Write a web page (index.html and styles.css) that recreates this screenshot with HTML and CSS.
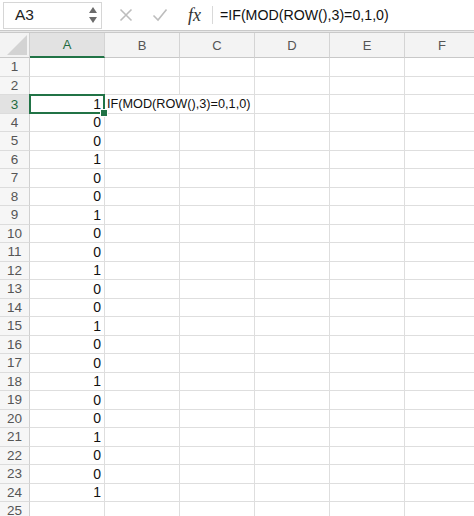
FILE: index.html
```html
<!DOCTYPE html>
<html>
<head>
<meta charset="utf-8">
<link rel="stylesheet" href="styles.css">
</head>
<body>
<div class="app">
  <div class="fbar">
    <div class="namebox">
      <span class="ref">A3</span>
      <span class="spin">
        <svg width="8" height="20" viewBox="0 0 8 20"><path d="M4 2 L8 8 L0 8 Z" fill="#6b6b6b"/><path d="M0 12 L8 12 L4 18 Z" fill="#6b6b6b"/></svg>
      </span>
    </div>
    <div class="tools">
      <svg class="ico-x" width="14" height="14" viewBox="0 0 14 14"><path d="M1.5 1.5 L12.5 12.5 M12.5 1.5 L1.5 12.5" stroke="#bdbdbd" stroke-width="1.6" fill="none"/></svg>
      <svg class="ico-ok" width="16" height="14" viewBox="0 0 16 14"><path d="M1.5 7.5 L6 12 L14.5 1.5" stroke="#bdbdbd" stroke-width="1.6" fill="none"/></svg>
      <span class="fx">fx</span>
    </div>
    <div class="formula">=IF(MOD(ROW(),3)=0,1,0)</div>
  </div>
  <div class="sep"></div>
  <div class="sheet">
    <div class="row head">
      <div class="corner"><svg width="20" height="20" viewBox="0 0 20 20"><path d="M20 0 L20 20 L0 20 Z" fill="#d3d3d3"/></svg></div>
      <div class="ch sel">A</div><div class="ch">B</div><div class="ch">C</div><div class="ch">D</div><div class="ch">E</div><div class="ch">F</div>
    </div>
    <div class="row"><div class="rh">1</div><div class="c n"></div><div class="c"></div><div class="c"></div><div class="c"></div><div class="c"></div><div class="c"></div></div>
    <div class="row"><div class="rh">2</div><div class="c n"></div><div class="c"></div><div class="c"></div><div class="c"></div><div class="c"></div><div class="c"></div></div>
    <div class="row"><div class="rh rsel">3</div><div class="c n active">1<span class="handle"></span></div><div class="c t span2">IF(MOD(ROW(),3)=0,1,0)</div><div class="c"></div><div class="c"></div><div class="c"></div></div>
    <div class="row"><div class="rh">4</div><div class="c n">0</div><div class="c"></div><div class="c"></div><div class="c"></div><div class="c"></div><div class="c"></div></div>
    <div class="row"><div class="rh">5</div><div class="c n">0</div><div class="c"></div><div class="c"></div><div class="c"></div><div class="c"></div><div class="c"></div></div>
    <div class="row"><div class="rh">6</div><div class="c n">1</div><div class="c"></div><div class="c"></div><div class="c"></div><div class="c"></div><div class="c"></div></div>
    <div class="row"><div class="rh">7</div><div class="c n">0</div><div class="c"></div><div class="c"></div><div class="c"></div><div class="c"></div><div class="c"></div></div>
    <div class="row"><div class="rh">8</div><div class="c n">0</div><div class="c"></div><div class="c"></div><div class="c"></div><div class="c"></div><div class="c"></div></div>
    <div class="row"><div class="rh">9</div><div class="c n">1</div><div class="c"></div><div class="c"></div><div class="c"></div><div class="c"></div><div class="c"></div></div>
    <div class="row"><div class="rh">10</div><div class="c n">0</div><div class="c"></div><div class="c"></div><div class="c"></div><div class="c"></div><div class="c"></div></div>
    <div class="row"><div class="rh">11</div><div class="c n">0</div><div class="c"></div><div class="c"></div><div class="c"></div><div class="c"></div><div class="c"></div></div>
    <div class="row"><div class="rh">12</div><div class="c n">1</div><div class="c"></div><div class="c"></div><div class="c"></div><div class="c"></div><div class="c"></div></div>
    <div class="row"><div class="rh">13</div><div class="c n">0</div><div class="c"></div><div class="c"></div><div class="c"></div><div class="c"></div><div class="c"></div></div>
    <div class="row"><div class="rh">14</div><div class="c n">0</div><div class="c"></div><div class="c"></div><div class="c"></div><div class="c"></div><div class="c"></div></div>
    <div class="row"><div class="rh">15</div><div class="c n">1</div><div class="c"></div><div class="c"></div><div class="c"></div><div class="c"></div><div class="c"></div></div>
    <div class="row"><div class="rh">16</div><div class="c n">0</div><div class="c"></div><div class="c"></div><div class="c"></div><div class="c"></div><div class="c"></div></div>
    <div class="row"><div class="rh">17</div><div class="c n">0</div><div class="c"></div><div class="c"></div><div class="c"></div><div class="c"></div><div class="c"></div></div>
    <div class="row"><div class="rh">18</div><div class="c n">1</div><div class="c"></div><div class="c"></div><div class="c"></div><div class="c"></div><div class="c"></div></div>
    <div class="row"><div class="rh">19</div><div class="c n">0</div><div class="c"></div><div class="c"></div><div class="c"></div><div class="c"></div><div class="c"></div></div>
    <div class="row"><div class="rh">20</div><div class="c n">0</div><div class="c"></div><div class="c"></div><div class="c"></div><div class="c"></div><div class="c"></div></div>
    <div class="row"><div class="rh">21</div><div class="c n">1</div><div class="c"></div><div class="c"></div><div class="c"></div><div class="c"></div><div class="c"></div></div>
    <div class="row"><div class="rh">22</div><div class="c n">0</div><div class="c"></div><div class="c"></div><div class="c"></div><div class="c"></div><div class="c"></div></div>
    <div class="row"><div class="rh">23</div><div class="c n">0</div><div class="c"></div><div class="c"></div><div class="c"></div><div class="c"></div><div class="c"></div></div>
    <div class="row"><div class="rh">24</div><div class="c n">1</div><div class="c"></div><div class="c"></div><div class="c"></div><div class="c"></div><div class="c"></div></div>
    <div class="row"><div class="rh">25</div><div class="c n"></div><div class="c"></div><div class="c"></div><div class="c"></div><div class="c"></div><div class="c"></div></div>
  </div>
</div>
</body>
</html>
```
FILE: styles.css
```css
html, body {
  margin: 0;
  padding: 0;
  background: #ffffff;
  overflow: hidden;
}
.app {
  width: 474px;
  height: 516px;
  overflow: hidden;
  font-family: "Liberation Sans", Arial, sans-serif;
  color: #111;
}
.fbar {
  height: 30px;
  display: flex;
  align-items: center;
  background: #fff;
}
.namebox {
  box-sizing: border-box;
  margin-left: 3px;
  width: 99px;
  height: 27px;
  border: 1px solid #d6d6d6;
  display: flex;
  align-items: center;
  justify-content: space-between;
  padding: 0 4px 0 11px;
}
.ref {
  font-size: 15.5px;
  color: #222;
}
.spin {
  display: flex;
  align-items: center;
}
.tools {
  display: flex;
  align-items: center;
  width: 111px;
  height: 18px;
  border-right: 1px solid #d9d9d9;
  padding-left: 17px;
  box-sizing: border-box;
}
.ico-x { margin-right: 19px; }
.ico-ok { margin-right: 20px; }
.fx {
  font-family: "Liberation Serif", "Times New Roman", serif;
  font-style: italic;
  font-size: 18px;
  color: #333;
}
.formula {
  padding-left: 7px;
  font-size: 14.2px;
  color: #111;
}
.sep {
  height: 1px;
  border-top: 1px solid #c9c9c9;
  border-bottom: 1px solid #c9c9c9;
  background: #e8e8e8;
}
.sheet {
  display: flex;
  flex-direction: column;
}
.row {
  display: grid;
  grid-template-columns: 30px 75px 75px 75px 75px 75px 75px;
  height: 18.5px;
}
.row.head {
  height: 25px;
}
.corner {
  background: #f3f3f3;
  border-right: 1px solid #d0d0d0;
  border-bottom: 1px solid #c8c8c8;
  display: flex;
  align-items: flex-end;
  justify-content: flex-end;
  padding: 0 2px 2px 0;
  box-sizing: border-box;
}
.ch {
  background: #f3f3f3;
  border-right: 1px solid #d4d4d4;
  border-bottom: 1px solid #c8c8c8;
  box-sizing: border-box;
  display: flex;
  align-items: center;
  justify-content: center;
  font-size: 13px;
  color: #555;
}
.ch.sel {
  background: #e2e2e2;
  color: #1f6b3f;
  border-bottom: 2px solid #217346;
}
.rh {
  background: #f6f6f6;
  border-right: 1px solid #d0d0d0;
  border-bottom: 1px solid #dcdcdc;
  box-sizing: border-box;
  display: flex;
  align-items: center;
  justify-content: center;
  font-size: 13.5px;
  color: #555;
}
.rh.rsel {
  background: #e2e2e2;
  color: #1f6b3f;
}
.c {
  border-right: 1px solid #dedede;
  border-bottom: 1px solid #dedede;
  box-sizing: border-box;
  display: flex;
  align-items: center;
  font-size: 14px;
  color: #111;
  white-space: nowrap;
}
.c.n {
  justify-content: flex-end;
  padding-right: 3px;
}
.c.t {
  padding-left: 2px;
  font-size: 12.7px;
}
.c.span2 {
  grid-column: span 2;
}
.c.active {
  position: relative;
  border: 2px solid #217346;
  margin: -1px 0 0 -1px;
  height: calc(100% + 1px);
  width: calc(100% + 1px);
  padding-right: 2px;
}
.handle {
  position: absolute;
  right: -5px;
  bottom: -5px;
  width: 6px;
  height: 6px;
  background: #217346;
  border: 1px solid #fff;
}
```
